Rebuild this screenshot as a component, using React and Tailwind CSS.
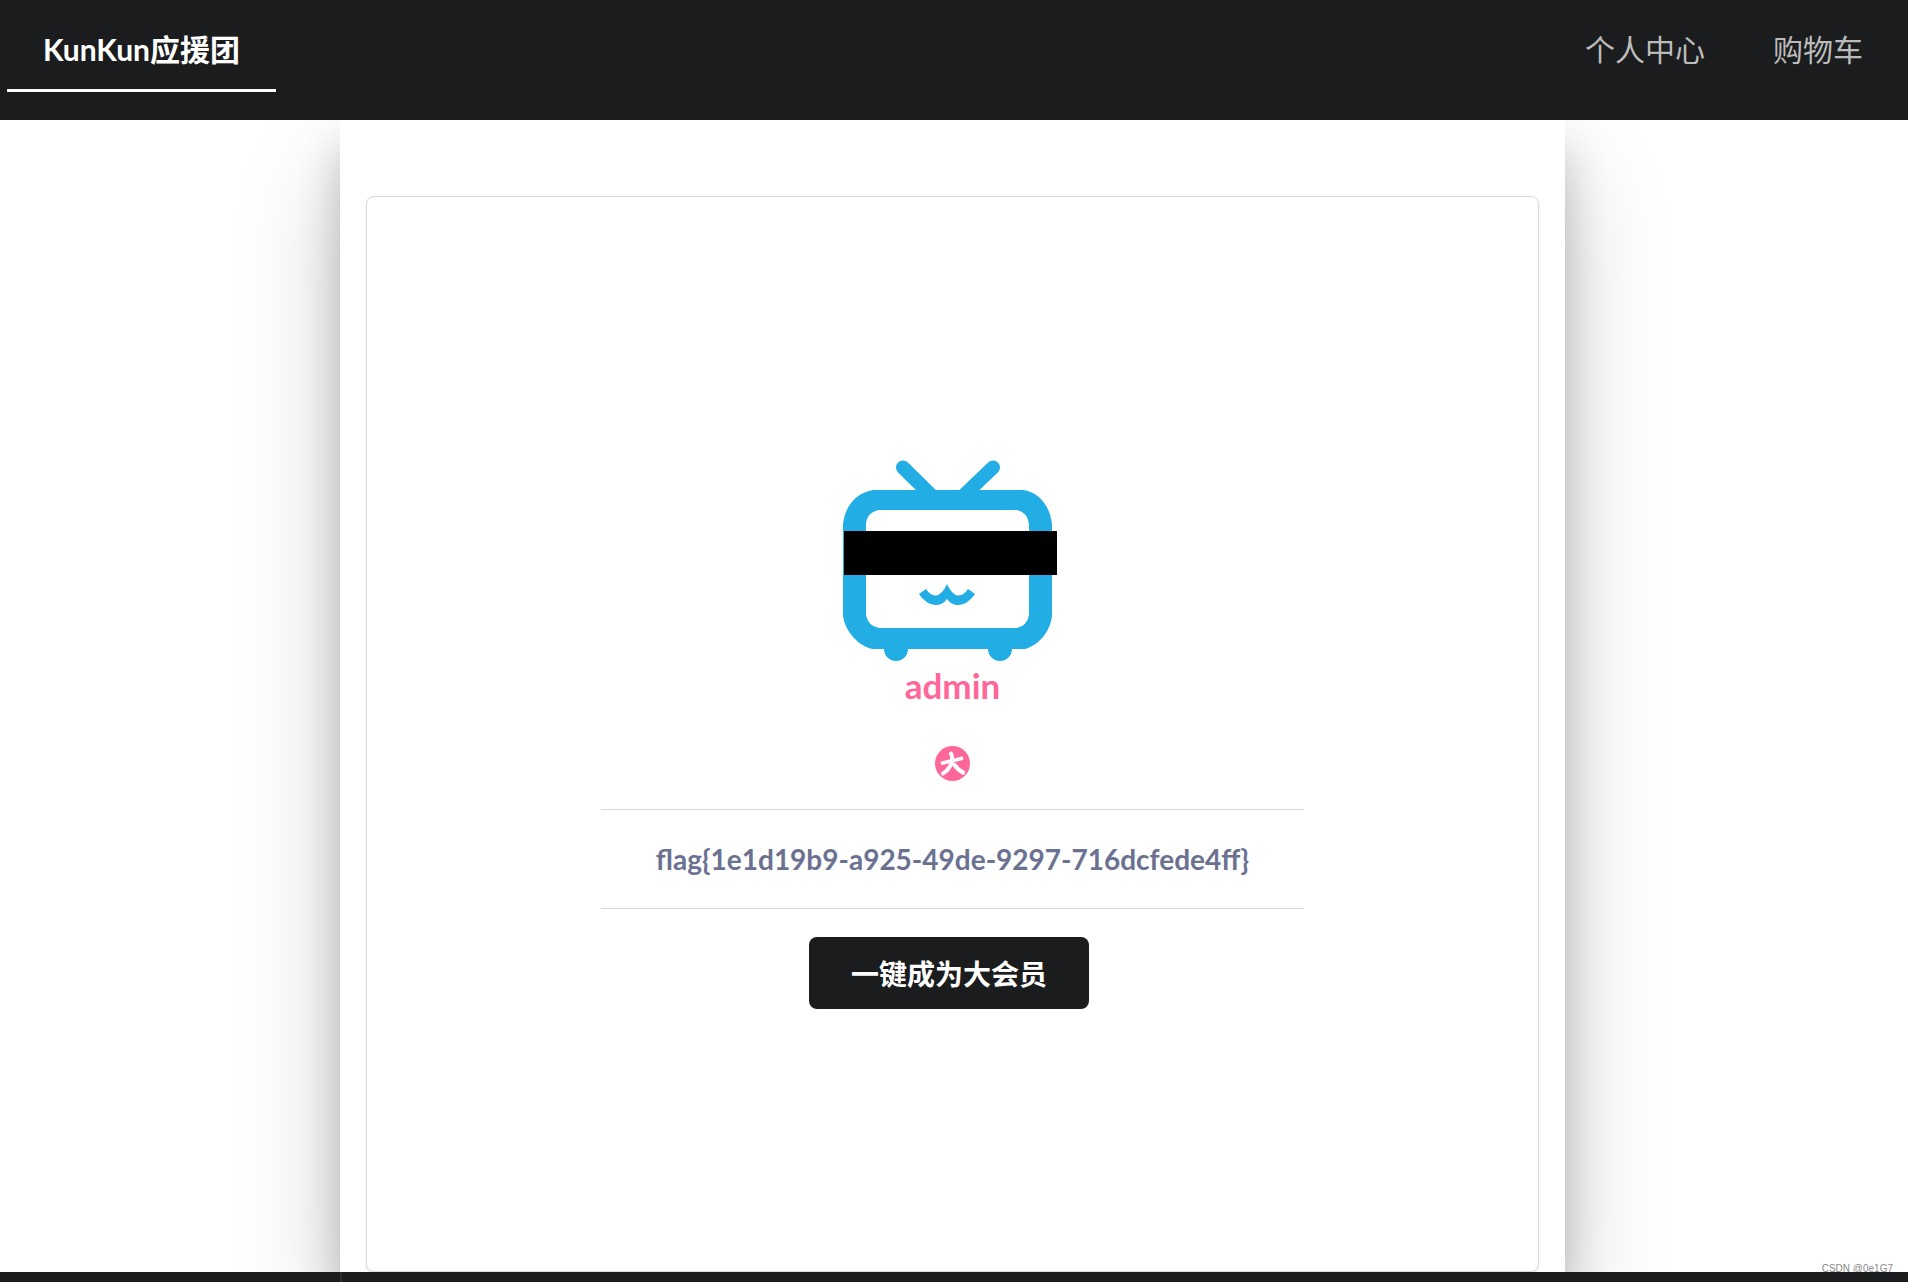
import React from "react";

const TvLogo = () => (
  <svg viewBox="0 0 216 202" className="block h-[202px] w-[216px]" role="img" aria-label="avatar">
    <g stroke="#23ade5" strokeWidth="14" strokeLinecap="round">
      <path d="M61 7.500L92 38" />
      <path d="M151 7.500L119 38" />
    </g>
    <circle cx="54" cy="189" r="12" fill="#23ade5" />
    <circle cx="158" cy="189" r="12" fill="#23ade5" />
    <path
      fillRule="evenodd"
      fill="#23ade5"
      d="M31 30H181C197 32 208 46 210 64V156C208 172 197 185 183 189H31C17 187 3 171 1 156V64C3 46 14 33 31 30ZM37 50Q25 52 24 64V155Q26 166 37 168H175Q185 166 187 155V64Q185 52 175 50Z"
    />
    <path
      d="M77 134L84 129C90 138 98 139 105 124C112 139 120 138 126 129L133 134C125 146 112 149 105 139C98 149 85 146 77 134Z"
      fill="#23ade5"
    />
    <rect x="2" y="71" width="213" height="44" fill="#000" />
  </svg>
);

const VipBadge = () => (
  <svg viewBox="0 0 35 35" className="block h-[35px] w-[35px]" role="img" aria-label="大会员">
    <circle cx="17.500" cy="17.500" r="17.500" fill="#ff6699" />
    <g fill="none" stroke="#fff" strokeLinecap="round" strokeLinejoin="round">
      <path d="M7.500 17L26.500 12.500" strokeWidth="3.800" />
      <path d="M16 7.500Q19 15 14.500 21Q12 25.500 8 27.500" strokeWidth="4" />
      <path d="M19.500 19Q23 24 28 26.500" strokeWidth="4.200" />
    </g>
  </svg>
);

const links = [
  { name: "个人中心", href: "#user" },
  { name: "购物车", href: "#shopcar" },
];

export default function App() {
  return (
    <div className="relative flex min-h-screen flex-col bg-white font-['Lato','Noto_Sans_CJK_SC',sans-serif]">
      <header className="relative z-10 h-[120px] bg-[#1b1c1d] px-[7px] pt-[5px]">
        <nav className="flex h-[87px] items-stretch justify-between text-[30px] leading-[30px]">
          <a href="#home" className="flex items-center border-b-3 border-white px-9 pt-[6px] pb-[2px] font-bold text-white">
            KunKun应援团
          </a>
          <div className="flex pr-1">
            {links.map((link) => (
              <a key={link.name} href={link.href} className="flex items-center px-[34px] pt-[6px] pb-[5px] text-[#bbbbbb]">
                {link.name}
              </a>
            ))}
          </div>
        </nav>
      </header>

      <main className="flex grow justify-center pr-[3px]">
        <div className="flex w-[64.3%] flex-col bg-white px-[26px] pt-[76px] shadow-[0_30px_40px_rgba(0,0,0,0.2),0_50px_100px_rgba(0,0,0,0.2)]">
          <section className="flex grow flex-col items-center justify-center rounded-lg border border-[#d9dadb] shadow-[0_1px_2px_rgba(34,36,38,0.15)]">
            <div className="pr-[6px]">
              <TvLogo />
            </div>
            <h2 className="text-[35px] leading-[46px] font-bold text-[#ff6699]">admin</h2>
            <div className="pt-[38px] pb-7">
              <VipBadge />
            </div>
            <div className="w-3/5 border-y border-[#d9dadb] py-[29px] text-center">
              <p className="text-[28px] leading-10 font-bold text-[#6b7191]">
                flag&#123;1e1d19b9-a925-49de-9297-716dcfede4ff&#125;
              </p>
            </div>
            <div className="pt-7 pr-[7px]">
              <button
                type="button"
                className="h-[72px] cursor-pointer rounded-lg bg-[#1b1c1d] px-[42px] pt-[2px] text-[28px] leading-7 font-bold text-white"
              >
                一键成为大会员
              </button>
            </div>
          </section>
        </div>
      </main>

      <footer className="relative z-10 flex h-[10px] justify-center bg-[#1b1c1d] pr-[3px]">
        <div className="w-[64.3%] border-l-2 border-[#2d2e2f]" />
      </footer>

      <span className="absolute right-[15px] bottom-[7px] font-['Liberation_Sans',sans-serif] text-[10px] leading-3 text-[#888888]">
        CSDN @0e1G7
      </span>
    </div>
  );
}
